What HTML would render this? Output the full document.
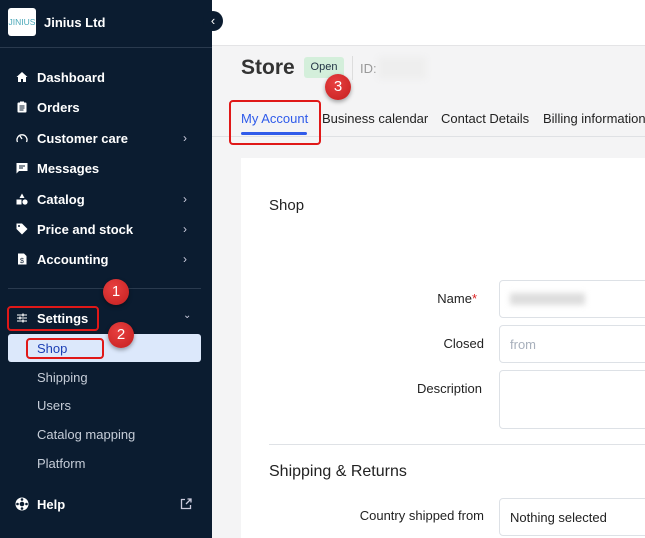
<!DOCTYPE html>
<html><head><style>
*{box-sizing:border-box;margin:0;padding:0}
body{width:645px;height:538px;overflow:hidden;font-family:"Liberation Sans",sans-serif;background:#f4f4f5;position:relative}
.sb{position:absolute;left:0;top:0;width:212px;height:538px;background:#0b1c30;color:#fff}
.a{position:absolute;font-size:13px;font-weight:bold;white-space:nowrap}
.ic{position:absolute;left:16px;width:12px;height:12px}
.chev{position:absolute;left:183px;font-size:12px;color:#ccd}
.sub{position:absolute;left:37px;font-size:13px;color:#c6cdd8}
.abs{position:absolute}
.circ{position:absolute;width:26px;height:26px;border-radius:50%;background:radial-gradient(circle at 40% 35%,#e84040,#c41f1f);color:#fff;font-size:15px;text-align:center;line-height:26px;box-shadow:0 2px 4px rgba(0,0,0,.35)}
.rb{position:absolute;border:2px solid #e01818;border-radius:4px}
.lbl{position:absolute;font-size:13px;color:#222;text-align:right;width:220px}
.inp{position:absolute;left:499px;width:160px;border:1px solid #dde1e6;border-radius:4px;background:#fff;font-size:13px}
</style></head><body>
<div class="sb">
 <div class="abs" style="left:8px;top:8px;width:28px;height:28px;background:#fff;border-radius:3px;color:#4aa8b8;font-size:8.5px;line-height:28px;text-align:center;letter-spacing:0;overflow:hidden">JINIUS</div>
 <div class="a" style="left:44px;top:15px">Jinius Ltd</div>
 <div class="abs" style="left:0;top:47px;width:212px;height:1px;background:#2a3a4e"></div>
 <svg class="ic" style="top:71px" viewBox="0 0 12 12"><path d="M6 1L0.5 6H2v5h3V8h2v3h3V6h1.5z" fill="#fff"/></svg>
 <div class="a" style="left:37px;top:70px">Dashboard</div>
 <svg class="ic" style="top:101px" viewBox="0 0 12 12"><rect x="1.5" y="1.5" width="9" height="10" rx="1" fill="#fff"/><rect x="4" y="0.5" width="4" height="2" fill="#fff"/><path d="M3.5 5h5M3.5 7h5M3.5 9h4" stroke="#0b1c30"/></svg>
 <div class="a" style="left:37px;top:100px">Orders</div>
 <svg class="ic" style="top:132px" viewBox="0 0 12 12"><path d="M1.5 10A5 5 0 1 1 10.5 10" stroke="#fff" stroke-width="1.3" fill="none"/><path d="M6 7L4 4" stroke="#fff" stroke-width="1.3"/></svg>
 <div class="a" style="left:37px;top:131px">Customer care</div><div class="chev" style="top:131px">›</div>
 <svg class="ic" style="top:162px" viewBox="0 0 12 12"><path d="M0.5 1h11v8H3l-2.5 2.5z" fill="#fff"/><path d="M3 4h6M3 6h4" stroke="#0b1c30"/></svg>
 <div class="a" style="left:37px;top:161px">Messages</div>
 <svg class="ic" style="top:193px" viewBox="0 0 12 12"><path d="M6 0.5L3.5 5h5z" fill="#fff"/><rect x="0.5" y="6.5" width="5" height="5" fill="#fff"/><circle cx="9" cy="9" r="2.6" fill="#fff"/></svg>
 <div class="a" style="left:37px;top:192px">Catalog</div><div class="chev" style="top:192px">›</div>
 <svg class="ic" style="top:223px" viewBox="0 0 12 12"><path d="M0.5 0.5h5.5l5.5 5.5-5.5 5.5-5.5-5.5z" fill="#fff"/><circle cx="3" cy="3" r="1" fill="#0b1c30"/></svg>
 <div class="a" style="left:37px;top:222px">Price and stock</div><div class="chev" style="top:222px">›</div>
 <svg class="ic" style="top:253px" viewBox="0 0 12 12"><path d="M2 0.5h6l2.5 2.5v8.5H2z" fill="#fff"/><text x="4" y="10" font-size="7" fill="#0b1c30" font-family="Liberation Sans">$</text></svg>
 <div class="a" style="left:37px;top:252px">Accounting</div><div class="chev" style="top:252px">›</div>
 <div class="abs" style="left:8px;top:288px;width:193px;height:1px;background:#2a3a4e"></div>
 <svg class="ic" style="top:312px" viewBox="0 0 12 12"><path d="M1 3h10M1 6h10M1 9h10" stroke="#fff" stroke-width="1"/><path d="M7 1.5v3M4 4.5v3M7 7.5v3" stroke="#fff" stroke-width="1.3"/></svg>
 <div class="a" style="left:37px;top:311px">Settings</div><div class="chev" style="top:310px;font-size:10px">⌄</div>
 <div class="abs" style="left:8px;top:334px;width:193px;height:28px;background:#dce8fb;border-radius:3px"></div>
 <div class="a" style="left:37px;top:341px;color:#1d3fb5;font-weight:normal">Shop</div>
 <div class="sub" style="top:370px">Shipping</div>
 <div class="sub" style="top:398px">Users</div>
 <div class="sub" style="top:427px">Catalog mapping</div>
 <div class="sub" style="top:456px">Platform</div>
 <svg class="abs" style="left:15px;top:497px" width="14" height="14" viewBox="0 0 14 14"><circle cx="7" cy="7" r="6.5" fill="#fff"/><circle cx="7" cy="7" r="2.3" fill="#0b1c30"/><circle cx="7" cy="2.5" r="1.3" fill="#0b1c30"/><circle cx="7" cy="11.5" r="1.3" fill="#0b1c30"/><circle cx="2.5" cy="7" r="1.3" fill="#0b1c30"/><circle cx="11.5" cy="7" r="1.3" fill="#0b1c30"/></svg>
 <div class="a" style="left:37px;top:497px">Help</div>
 <svg class="abs" style="left:180px;top:498px" width="12" height="12" viewBox="0 0 12 12"><path d="M5 1.5H1.5v9h9V7" stroke="#ccd" stroke-width="1.3" fill="none"/><path d="M6 6L11 1M7.5 1H11v3.5" stroke="#ccd" stroke-width="1.3" fill="none"/></svg>
</div>
<div class="abs" style="left:212px;top:0;width:433px;height:46px;background:#fff;border-bottom:1px solid #e4e4e6"></div>
<div class="abs" style="left:203px;top:11px;width:20px;height:20px;border-radius:50%;background:#0b1c30;color:#fff;font-size:13px;line-height:19px;text-align:center">‹</div>
<div class="abs" style="left:241px;top:56px;font-size:21px;font-weight:bold;color:#333">Store</div>
<div class="abs" style="left:304px;top:57px;width:40px;height:21px;background:#d4efdb;border-radius:3px;font-size:11px;line-height:21px;text-align:center;color:#234">Open</div>
<div class="abs" style="left:352px;top:56px;width:1px;height:24px;background:#ddd"></div>
<div class="abs" style="left:360px;top:61px;font-size:13px;color:#999">ID:</div>
<div class="abs" style="left:378px;top:57px;width:48px;height:22px;background:#eee;filter:blur(3px)"></div>
<div class="abs" style="left:212px;top:136px;width:433px;height:1px;background:#dfe1e4"></div>
<div class="abs" style="left:241px;top:111px;font-size:13px;color:#2f5bea">My Account</div>
<div class="abs" style="left:241px;top:132px;width:66px;height:3px;background:#2f5bea;border-radius:2px"></div>
<div class="abs" style="left:322px;top:111px;font-size:13px;color:#222;white-space:nowrap">Business calendar</div>
<div class="abs" style="left:441px;top:111px;font-size:13px;color:#222;white-space:nowrap">Contact Details</div>
<div class="abs" style="left:543px;top:111px;font-size:13px;color:#222;white-space:nowrap">Billing information</div>
<div class="abs" style="left:241px;top:158px;width:404px;height:380px;background:#fff"></div>
<div class="abs" style="left:269px;top:197px;font-size:15px;color:#222">Shop</div>
<div class="lbl" style="left:257px;top:291px">Name<span style="color:#d22">*</span></div>
<div class="inp" style="top:280px;height:38px"><div style="margin:12px 10px;width:75px;height:12px;background:#ddd;filter:blur(3px)"></div></div>
<div class="lbl" style="left:264px;top:336px">Closed</div>
<div class="inp" style="top:325px;height:38px;color:#a8b0bc;padding:11px 10px">from</div>
<div class="lbl" style="left:262px;top:381px">Description</div>
<div class="inp" style="top:370px;height:59px"></div>
<div class="abs" style="left:269px;top:444px;width:376px;height:1px;background:#dfe2e6"></div>
<div class="abs" style="left:269px;top:463px;font-size:16px;color:#222">Shipping &amp; Returns</div>
<div class="lbl" style="left:264px;top:508px">Country shipped from</div>
<div class="inp" style="top:498px;height:38px;padding:11px 10px;color:#222">Nothing selected</div>
<div class="rb" style="left:7px;top:306px;width:92px;height:25px"></div>
<div class="rb" style="left:26px;top:338px;width:78px;height:21px"></div>
<div class="rb" style="left:229px;top:100px;width:92px;height:45px"></div>
<div class="circ" style="left:103px;top:279px">1</div>
<div class="circ" style="left:108px;top:322px">2</div>
<div class="circ" style="left:325px;top:74px">3</div>
</body></html>
